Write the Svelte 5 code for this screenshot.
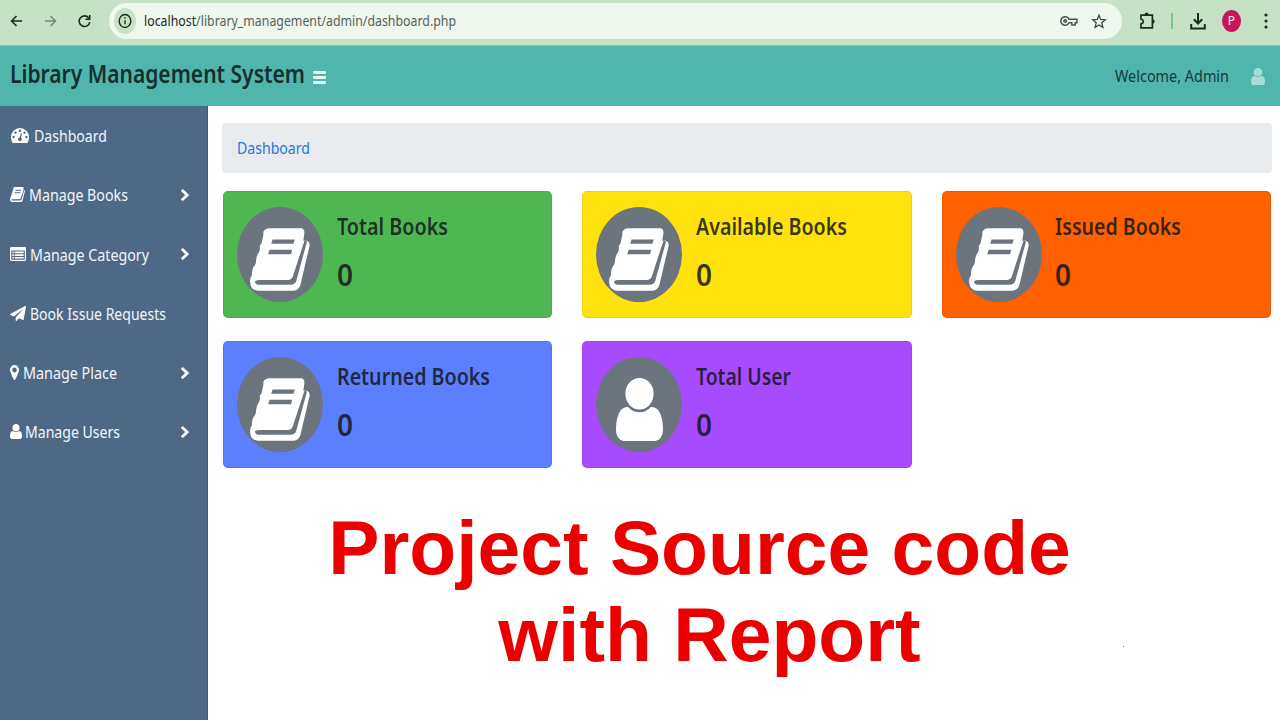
<script>
  const icons = {
    book: {
      box: '74 98 181 188',
      d: 'M130 99H228Q239 100 238 113L235 136H246Q255 140 254 150L226 268Q221 284 206 285H98Q76 283 75 262 72 250 80 238 79 226 84 215 94 205 92 195 93 182 100 172 106 163 103 152 112 143 111 132 116 118 114 110 118 101 130 99ZM238 137 204 240Q201 252 190 253H102Q95 253 89 257 89 266 98 267H199Q210 266 213 258L245 142V137ZM142 132H209L205 145H138ZM133 163H201L198 176H129Z'
    },
    user: {
      box: '256 128 1280 1536',
      d: 'M1536 1399q0 109-62.5 187t-150.5 78h-854q-88 0-150.5-78t-62.5-187q0-85 8.5-160.5t31.5-152 58.5-131 94-89 134.5-34.5q131 128 313 128t313-128q76 0 134.5 34.5t94 89 58.5 131 31.5 152 8.5 160.5zm-256-887q0 159-112.5 271.5t-271.5 112.5-271.5-112.5-112.5-271.5 112.5-271.5 271.5-112.5 271.5 112.5 112.5 271.5z'
    },
    plane: {
      box: '0 0 1792 1792',
      d: 'M1764 11q33 24 27 64l-256 1536q-5 29-32 45-14 8-31 8-11 0-24-5l-453-185-242 295q-18 23-49 23-13 0-22-4-19-7-30.5-23.5t-11.5-36.5v-349l864-1059-1069 925-395-162q-37-14-40-55-2-40 32-59l1664-960q15-9 32-9 20 0 36 11z'
    },
    pin: {
      box: '384 128 1024 1536',
      d: 'M1152 640q0-106-75-181t-181-75-181 75-75 181 75 181 181 75 181-75 75-181zm256 0q0 109-33 179l-364 774q-16 33-47.5 52t-67.5 19-67.5-19-46.5-52l-365-774q-33-70-33-179 0-212 150-362t362-150 362 150 150 362z'
    },
    chevron: {
      box: '346 7 1036 1631',
      d: 'M1363 877l-742 742q-19 19-45 19t-45-19l-166-166q-19-19-19-45t19-45l531-531-531-531q-19-19-19-45t19-45l166-166q19-19 45-19t45 19l742 742q19 19 19 45t-19 45z'
    },
    gauge: {
      box: '0 0 18 15',
      d: 'M9 0a9 9 0 0 1 9 9c0 2-.5 3.9-1.4 5.4-.3.4-.5.6-1 .6H2.4c-.5 0-.7-.2-1-.6A10 10 0 0 1 0 9a9 9 0 0 1 9-9ZM2.6 7.8a1.2 1.2 0 1 0 0 2.4 1.2 1.2 0 0 0 0-2.4ZM4.5 3.4a1.2 1.2 0 1 0 0 2.4 1.2 1.2 0 0 0 0-2.4ZM9 1.5a1.2 1.2 0 1 0 0 2.4 1.2 1.2 0 0 0 0-2.4Zm4.5 1.9a1.2 1.2 0 1 0 0 2.4 1.2 1.2 0 0 0 0-2.4Zm1.9 4.4a1.2 1.2 0 1 0 0 2.4 1.2 1.2 0 0 0 0-2.4ZM10 5.2 8.8 9.3a1.9 1.9 0 1 0 1.2.3l1.1-4.1Z'
    },
    list: {
      box: '0 0 16 14',
      d: 'M1.4 0h13.2Q16 0 16 1.4v11.2q0 1.4-1.4 1.4H1.4Q0 14 0 12.6V1.4Q0 0 1.4 0ZM1.2 3.6v9.1h13.6V3.6ZM2.3 4.6h1.6V6.2H2.3ZM4.7 4.6h9V6.2h-9ZM2.3 7.3h1.6v1.6H2.3ZM4.7 7.3h9v1.6h-9ZM2.3 10h1.6v1.6H2.3ZM4.7 10h9v1.6h-9Z'
    }
  };

  const menu = [
    { label: 'Dashboard', icon: 'gauge', iconWidth: 18, width: 73 },
    { label: 'Manage Books', icon: 'book', iconWidth: 15, width: 99, children: true },
    { label: 'Manage Category', icon: 'list', iconWidth: 16, width: 119, children: true },
    { label: 'Book Issue Requests', icon: 'plane', iconWidth: 16, width: 136 },
    { label: 'Manage Place', icon: 'pin', iconWidth: 9, width: 94, children: true },
    { label: 'Manage Users', icon: 'user', iconWidth: 12, width: 95, children: true }
  ];

  const cards = [
    { title: 'Total Books', count: 0, color: 'green', icon: 'book', width: 111 },
    { title: 'Available Books', count: 0, color: 'yellow', icon: 'book', width: 151 },
    { title: 'Issued Books', count: 0, color: 'orange', icon: 'book', width: 126 },
    { title: 'Returned Books', count: 0, color: 'blue', icon: 'book', width: 153 },
    { title: 'Total User', count: 0, color: 'purple', icon: 'user', width: 95 }
  ];

  // condense a label so it takes exactly the given width
  function fit(node, width) {
    const natural = node.getBoundingClientRect().width;
    node.style.transform = `scaleX(${width / natural})`;
    node.style.marginRight = `${width - natural}px`;
  }
</script>

{#snippet glyph(name)}
  <svg class="glyph" viewBox={icons[name].box} preserveAspectRatio="none" aria-hidden="true">
    <path fill-rule="evenodd" d={icons[name].d} />
  </svg>
{/snippet}

<div class="window">
  <div class="browser-bar">
    <svg class="nav-icon" viewBox="0 0 16 16"><path d="M14 8H3M8 2.6 2.7 8 8 13.4" /></svg>
    <svg class="nav-icon disabled" viewBox="0 0 16 16"><path d="M2 8h11M8 2.6 13.3 8 8 13.4" /></svg>
    <svg class="nav-icon" viewBox="0 0 16 16">
      <path d="M13.6 9.2A5.7 5.7 0 1 1 12.4 4.6" />
      <path class="solid" d="M14.4 1.6V7H9V5.4h1.9L12.8 3.6V1.6Z" />
    </svg>
    <div class="address">
      <span class="site-info">
        <svg viewBox="0 0 14 16" preserveAspectRatio="none">
          <ellipse cx="7" cy="8" rx="5.8" ry="6.5" /><path d="M7 7.3v4M7 4.3v1.5" />
        </svg>
      </span>
      <span class="url fit" use:fit={312}><b>localhost</b>/library_management/admin/dashboard.php</span>
      <svg class="key" viewBox="0 0 18 12">
        <path d="M9 4.3A4.3 4.3 0 1 0 9 7.7h2.8v2.3h3.4V7.7h1.7V4.3Z" />
        <circle cx="5.2" cy="6" r="1.3" />
      </svg>
      <svg class="star" viewBox="0 0 16 16">
        <path d="m8 1.7 1.7 4.2 4.6.4-3.5 3 1.1 4.6L8 11.4l-3.9 2.5 1.1-4.6-3.5-3 4.6-.4Z" />
      </svg>
    </div>
    <svg class="puzzle" viewBox="0 0 17 18">
      <path d="M2 3.2h11.4v12.7H2v-4q2.3-.4 2.3-2.3T2 7Z" />
      <path class="solid" d="M5.5 3a2.1 2.4 0 0 1 4.2 0ZM13.6 7.2a2.6 2.3 0 0 1 0 4.5Z" />
    </svg>
    <span class="divider"></span>
    <svg class="download" viewBox="0 0 16 18"><path d="M8 1v10.4M3.8 7.2 8 11.5l4.2-4.3M1.2 12v4.4h13.6V12" /></svg>
    <span class="profile">P</span>
    <svg class="dots" viewBox="0 0 4 16"><circle cx="2" cy="2" r="1.6" /><circle cx="2" cy="8" r="1.6" /><circle cx="2" cy="14" r="1.6" /></svg>
  </div>

  <header class="topbar">
    <h1><span class="fit" use:fit={295}>Library Management System</span></h1>
    <div class="toggle"><i></i><i></i><i></i></div>
    <span class="welcome fit" use:fit={114}>Welcome, Admin</span>
    <div class="avatar">{@render glyph('user')}</div>
  </header>

  <div class="body">
    <nav class="sidebar">
      {#each menu as item}
        <div class="menu-item">
          <span class="menu-icon {item.icon}" style:width="{item.iconWidth}px">{@render glyph(item.icon)}</span>
          <span class="fit" use:fit={item.width}>{item.label}</span>
          {#if item.children}
            <span class="arrow">{@render glyph('chevron')}</span>
          {/if}
        </div>
      {/each}
    </nav>

    <main>
      <div class="breadcrumb"><span class="fit" use:fit={73}>Dashboard</span></div>

      <div class="cards">
        {#each cards as card}
          <section class="card {card.color}">
            <div class="circle {card.icon}">{@render glyph(card.icon)}</div>
            <div>
              <h4><span class="fit" use:fit={card.width}>{card.title}</span></h4>
              <p class="count"><span class="fit" use:fit={16}>{card.count}</span></p>
            </div>
          </section>
        {/each}
      </div>

      <div class="caption">
        <div class="line">Project Source code</div>
        <div class="line second">with Report<span class="speck"></span></div>
      </div>
    </main>
  </div>
</div>

<style>
  :global(body) {
    margin: 0;
    overflow: hidden;
  }

  .window {
    width: 1280px;
    height: 720px;
    display: flex;
    flex-direction: column;
    overflow: hidden;
    background: #fff;
    color: #212529;
    font-family: 'Noto Sans', 'Open Sans', sans-serif;
    font-size: 16px;
  }

  .fit {
    display: inline-block;
    white-space: nowrap;
    transform-origin: left center;
  }

  .glyph {
    display: block;
    width: 100%;
    height: 100%;
    fill: currentColor;
  }

  svg {
    flex: none;
  }

  /* browser toolbar */
  .browser-bar {
    flex: none;
    box-sizing: border-box;
    height: 46px;
    padding: 0 12px 3px 9px;
    display: flex;
    align-items: center;
    background: #c6e1c5;
    border-bottom: 1px solid #8fc3ac;
  }

  .browser-bar svg {
    fill: none;
    stroke: #1c2a1d;
    stroke-width: 1.7;
  }

  .nav-icon {
    width: 15px;
    height: 16px;
    margin-right: 19px;
  }

  .nav-icon.disabled {
    opacity: 0.45;
  }

  .address {
    box-sizing: border-box;
    width: 1013px;
    height: 36px;
    margin-left: -2px;
    padding: 0 15px 0 5px;
    display: flex;
    align-items: center;
    border-radius: 18px;
    background: #eff7ef;
  }

  .site-info {
    width: 22px;
    height: 26px;
    margin-right: 8px;
    display: flex;
    align-items: center;
    justify-content: center;
    border-radius: 50%;
    background: #c6e1c5;
  }

  .site-info svg {
    width: 14px;
    height: 16px;
    stroke-width: 1.4;
  }

  .url {
    margin-top: -2px;
    font-size: 14.5px;
    color: #586159;
  }

  .url b {
    color: #1f2720;
    font-weight: 400;
  }

  .browser-bar .key {
    width: 18px;
    height: 12px;
    margin-left: auto;
    stroke: #4a544b;
    stroke-width: 1.5;
  }

  .browser-bar .star {
    width: 16px;
    height: 17px;
    margin-left: 13px;
    stroke: #3f4840;
    stroke-width: 1.3;
  }

  .puzzle {
    width: 17px;
    height: 18px;
    margin-left: 17px;
  }

  .browser-bar .solid {
    fill: #1c2a1d;
    stroke: none;
  }

  .divider {
    width: 2px;
    height: 16px;
    margin-left: 15px;
    background: #7fc487;
  }

  .browser-bar .download {
    width: 16px;
    height: 18px;
    margin-left: 17px;
    stroke-width: 2;
  }

  .profile {
    width: 19px;
    height: 22px;
    margin-left: 16px;
    border-radius: 50%;
    background: #c2185b;
    color: #fbe6ee;
    font-size: 12px;
    line-height: 22px;
    text-align: center;
  }

  .browser-bar .dots {
    width: 4px;
    height: 16px;
    margin-left: auto;
    fill: #1c2a1d;
    stroke: none;
  }

  /* application header */
  .topbar {
    flex: none;
    box-sizing: border-box;
    height: 60px;
    padding: 0 15px 0 10px;
    display: flex;
    align-items: center;
    background: #50b6ab;
  }

  h1 {
    margin: -5px 8px 0 0;
    font-size: 24.5px;
    font-weight: 600;
    line-height: 34px;
    color: #12302f;
  }

  .toggle {
    display: flex;
    flex-direction: column;
    gap: 2px;
    width: 13px;
    margin-top: 2px;
  }

  .toggle i {
    height: 3px;
    border-radius: 1px;
    background: #e4f5f3;
  }

  .welcome {
    margin-top: -1px;
    margin-left: auto;
    font-size: 16.5px;
    color: #14393a;
  }

  .avatar {
    width: 14px;
    height: 17px;
    margin-left: 22px;
    color: #a9dcd6;
  }

  .body {
    flex: 1;
    display: flex;
    min-height: 0;
  }

  .sidebar {
    flex: none;
    box-sizing: border-box;
    width: 208px;
    background: #4e6985;
    border-right: 1px solid #3f5a76;
    color: #f2f6fa;
    font-size: 17px;
  }

  .menu-item {
    height: 59.25px;
    padding: 0 18px 0 10px;
    display: flex;
    align-items: center;
  }

  .menu-icon {
    flex: none;
    height: 15px;
    margin-right: 4px;
    color: #fff;
  }

  .menu-icon.gauge {
    margin-left: 1px;
    margin-right: 5px;
  }

  .menu-icon.list {
    height: 14px;
  }

  .menu-icon.user {
    margin-right: 3px;
  }

  .arrow {
    width: 8px;
    height: 12px;
    margin-left: auto;
    color: #fff;
  }

  main {
    flex: 1;
    padding: 17px 8px 0 14px;
  }

  .breadcrumb {
    box-sizing: border-box;
    height: 50px;
    padding: 0 15px 1px;
    display: flex;
    align-items: center;
    border-radius: 4px;
    background: #e8ebee;
    color: #2675dc;
    font-size: 17px;
  }

  .cards {
    margin: 18px 1px 0;
    display: grid;
    grid-template-columns: repeat(3, 1fr);
    grid-auto-rows: 127px;
    gap: 23px 30px;
  }

  .card {
    box-sizing: border-box;
    padding: 15px 13px;
    display: flex;
    gap: 13.5px;
    border: 1px solid rgba(0, 0, 0, 0.07);
    border-radius: 5px;
    color: rgba(20, 24, 28, 0.85);
  }

  .green {
    background: #4fb751;
  }

  .yellow {
    background: #ffe20d;
  }

  .orange {
    background: #ff6000;
  }

  .blue {
    background: #5b7fff;
  }

  .purple {
    background: #a74bff;
  }

  .circle {
    flex: none;
    width: 86px;
    height: 95px;
    display: flex;
    align-items: center;
    justify-content: center;
    border-radius: 50%;
    background: #6c757d;
    color: #fff;
  }

  .circle .glyph {
    width: 60px;
    height: 63px;
    margin-top: 9px;
  }

  .circle.user .glyph {
    width: 47px;
  }

  h4 {
    margin: 3px 0 0;
    font-size: 24px;
    font-weight: 600;
    line-height: 32px;
  }

  .count {
    margin: 12px 0 0;
    font-size: 31px;
    font-weight: 600;
    line-height: 40px;
  }

  .caption {
    margin-top: 36px;
    padding-right: 95px;
    color: #eb0000;
    font-family: 'Liberation Sans', Arial, sans-serif;
    font-size: 76.8px;
    font-weight: 700;
    line-height: 87px;
    text-align: center;
  }

  .second {
    position: relative;
    padding-left: 20px;
  }

  .speck {
    position: absolute;
    right: 53px;
    bottom: 31px;
    width: 1px;
    height: 1px;
    background: #777;
  }
</style>
